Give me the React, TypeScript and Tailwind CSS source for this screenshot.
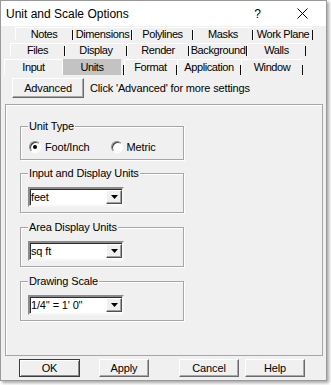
import React from "react";

// Classic Windows dialog: "Unit and Scale Options"

type Tab = { label: string; w: number; selected?: boolean; noEdge?: boolean };

const TAB_ROWS: { pl: number; h: number; mt: number; tabs: Tab[] }[] = [
  {
    pl: 14,
    h: 13,
    mt: 1,
    tabs: [
      { label: "Notes", w: 58 },
      { label: "Dimensions", w: 59 },
      { label: "Polylines", w: 61 },
      { label: "Masks", w: 60 },
      { label: "Work Plane", w: 60 },
    ],
  },
  {
    pl: 9,
    h: 13,
    mt: 3,
    tabs: [
      { label: "Files", w: 55 },
      { label: "Display", w: 62 },
      { label: "Render", w: 62 },
      { label: "Background", w: 58 },
      { label: "Walls", w: 59 },
    ],
  },
  {
    pl: 3,
    h: 16,
    mt: 3,
    tabs: [
      { label: "Input", w: 59, noEdge: true },
      { label: "Units", w: 61, selected: true },
      { label: "Format", w: 53 },
      { label: "Application", w: 64 },
      { label: "Window", w: 62 },
    ],
  },
];

const FONT = { fontFamily: '"Liberation Sans", Arial, sans-serif' };

function TabButton({ tab, h }: { tab: Tab; h: number }) {
  return (
    <div
      className="flex shrink-0 items-stretch"
      style={{ width: tab.w, height: h }}
    >
      <div
        className={
          tab.selected
            ? "flex flex-1 items-center justify-center bg-[#c3c3c3] mr-[2px] text-[11px] leading-none tracking-[-0.4px] text-black"
            : "flex flex-1 items-center justify-center border-t border-l border-white text-[11px] leading-none tracking-[-0.4px] text-black"
        }
      >
        {tab.label}
      </div>
      {tab.noEdge ? (
        <div className="w-px bg-white" />
      ) : (
        <div className="w-px self-end h-[10px] bg-[#101010]" />
      )}
    </div>
  );
}

function PushButton({
  label,
  w,
  h,
  isDefault,
}: {
  label: string;
  w: number;
  h: number;
  isDefault?: boolean;
}) {
  return (
    <div
      className={
        isDefault
          ? "flex shrink-0 items-center justify-center border border-[#3c3c3c] bg-[#f0f0f0] shadow-[inset_1px_1px_0_#ffffff,inset_-1px_-1px_0_#8a8a8a] text-[11px] tracking-[-0.15px] text-black"
          : "flex shrink-0 items-center justify-center border border-white border-r-[#6a6a6a] border-b-[#6a6a6a] bg-[#f0f0f0] shadow-[inset_-1px_-1px_0_#a8a8a8] text-[11px] tracking-[-0.15px] text-black"
      }
      style={{ width: w, height: h }}
    >
      {label}
    </div>
  );
}

function Radio({ checked, label }: { checked?: boolean; label: string }) {
  return (
    <div className="flex items-center gap-[4px]">
      <div className="flex h-[12px] w-[12px] items-center justify-center rounded-full border border-[#8a8a8a] border-r-white border-b-white bg-white shadow-[inset_1px_1px_0_#3c3c3c]">
        {checked && <div className="h-[4px] w-[4px] rounded-full bg-black" />}
      </div>
      <span className="text-[11px] tracking-[-0.15px] text-black leading-none">
        {label}
      </span>
    </div>
  );
}

function Combo({ value }: { value: string }) {
  return (
    <div className="ml-[7px] mt-[7px] flex h-[20px] w-[96px] border-2 border-[#8a8a8a] border-r-[#f6f6f6] border-b-[#f6f6f6] bg-white shadow-[inset_1px_1px_0_#2c2c2c]">
      <div className="flex flex-1 items-center pl-[1px] pt-[1px] text-[11px] tracking-[-0.15px] text-black leading-none">
        {value}
      </div>
      <div className="my-[1px] mr-[0px] flex w-[16px] items-center justify-center border border-white border-r-[#505050] border-b-[#505050] bg-[#f0f0f0] shadow-[inset_-1px_-1px_0_#a0a0a0]">
        <svg width="7" height="4" viewBox="0 0 7 4">
          <polygon points="0,0 7,0 3.5,4" fill="#000" />
        </svg>
      </div>
    </div>
  );
}

function GroupBox({
  title,
  h,
  mt,
  children,
}: {
  title: string;
  h: number;
  mt: number;
  children: React.ReactNode;
}) {
  return (
    <div
      className="ml-[14px] w-[164px] border border-[#a6a6a6] shadow-[inset_1px_1px_0_#ffffff,1px_1px_0_#ffffff]"
      style={{ height: h, marginTop: mt }}
    >
      <div className="-mt-[7px] ml-[7px] w-fit bg-[#f0f0f0] px-[1px] text-[11px] leading-[13px] tracking-[-0.15px] text-black">
        {title}
      </div>
      {children}
    </div>
  );
}

export default function App() {
  return (
    <div className="h-[385px] w-[331px] bg-white" style={FONT}>
      <div className="flex h-[381px] w-[327px] flex-col border border-[#9a9a9a] bg-[#f0f0f0] shadow-[2px_2px_3px_rgba(0,0,0,0.35)]">
        {/* Title bar */}
        <div className="flex h-[25px] shrink-0 items-center bg-white pl-[5px]">
          <span className="text-[12px] text-black">Unit and Scale Options</span>
          <div className="flex-1" />
          <span className="text-[12px] text-black">?</span>
          <svg
            className="ml-[36px] mr-[18px]"
            width="11"
            height="11"
            viewBox="0 0 11 11"
          >
            <line x1="0.5" y1="0.5" x2="10.5" y2="10.5" stroke="#000" strokeWidth="1" />
            <line x1="10.5" y1="0.5" x2="0.5" y2="10.5" stroke="#000" strokeWidth="1" />
          </svg>
        </div>

        {/* Tab rows */}
        {TAB_ROWS.map((row, i) => (
          <div
            key={i}
            className="flex shrink-0"
            style={{ paddingLeft: row.pl, marginTop: row.mt }}
          >
            {row.tabs.map((t) => (
              <TabButton key={t.label} tab={t} h={row.h} />
            ))}
          </div>
        ))}

        {/* Advanced row */}
        <div className="mt-[3px] flex shrink-0 items-center pl-[11px]">
          <PushButton label="Advanced" w={72} h={20} />
          <span className="ml-[6px] text-[11px] tracking-[-0.15px] text-black">
            Click 'Advanced' for more settings
          </span>
        </div>

        {/* Page panel */}
        <div className="ml-[4px] mt-[6px] flex h-[252px] w-[318px] shrink-0 flex-col border border-[#a6a6a6] pt-[21px] shadow-[inset_1px_1px_0_#ffffff]">
          <GroupBox title="Unit Type" h={34} mt={0}>
            <div className="ml-[8px] mt-[8px] flex">
              <Radio checked label="Foot/Inch" />
              <div className="ml-[21px]">
                <Radio label="Metric" />
              </div>
            </div>
          </GroupBox>
          <GroupBox title="Input and Display Units" h={40} mt={13}>
            <Combo value="feet" />
          </GroupBox>
          <GroupBox title="Area Display Units" h={40} mt={14}>
            <Combo value="sq ft" />
          </GroupBox>
          <GroupBox title="Drawing Scale" h={40} mt={14}>
            <Combo value={"1/4'' = 1' 0''"} />
          </GroupBox>
        </div>

        {/* Dialog buttons */}
        <div className="mt-[3px] flex shrink-0 pl-[18px]">
          <PushButton label="OK" w={61} h={18} isDefault />
          <div className="ml-[19px]">
            <PushButton label="Apply" w={50} h={18} />
          </div>
          <div className="ml-[30px]">
            <PushButton label="Cancel" w={60} h={18} />
          </div>
          <div className="ml-[6px]">
            <PushButton label="Help" w={60} h={18} />
          </div>
        </div>
      </div>
    </div>
  );
}
